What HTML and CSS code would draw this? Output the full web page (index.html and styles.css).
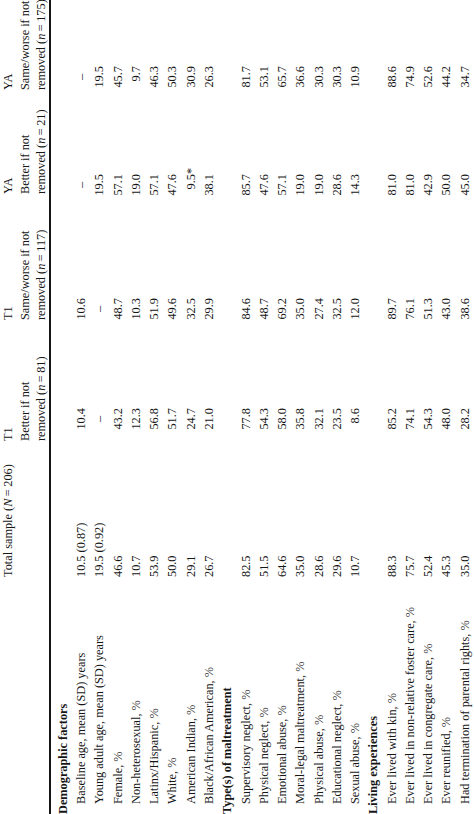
FILE: index.html
```html
<!DOCTYPE html>
<html lang="en">
<head>
<meta charset="utf-8">
<title>Table</title>
<link rel="stylesheet" href="styles.css">
</head>
<body>
<div class="page">
  <div class="sheet">
    <div class="row head">
      <div class="h h0"></div>
      <div class="h h1">Total sample (<i>N</i>&#8201;=&#8201;206)</div>
      <div class="h h2">T1<br>Better if not<br>removed (<i>n</i>&#8201;=&#8201;81)</div>
      <div class="h h3">T1<br>Same/worse if not<br>removed (<i>n</i>&#8201;=&#8201;117)</div>
      <div class="h h4">YA<br>Better if not<br>removed (<i>n</i>&#8201;=&#8201;21)</div>
      <div class="h h5">YA<br>Same/worse if not<br>removed (<i>n</i>&#8201;=&#8201;175)</div>
    </div>
    <div class="tbody">
      <div class="row"><div class="sec">Demographic factors</div></div>
      <div class="row"><div class="lab">Baseline age, mean (SD) years</div><div class="c1">10.5 (0.87)</div><div class="c2"><span class="v">10.4</span></div><div class="c3"><span class="v">10.6</span></div><div class="c4"><span class="v dash">–</span></div><div class="c5"><span class="v dash">–</span></div></div>
      <div class="row"><div class="lab">Young adult age, mean (SD) years</div><div class="c1">19.5 (0.92)</div><div class="c2"><span class="v dash">–</span></div><div class="c3"><span class="v dash">–</span></div><div class="c4"><span class="v">19.5</span></div><div class="c5"><span class="v">19.5</span></div></div>
      <div class="row"><div class="lab">Female, %</div><div class="c1">46.6</div><div class="c2"><span class="v">43.2</span></div><div class="c3"><span class="v">48.7</span></div><div class="c4"><span class="v">57.1</span></div><div class="c5"><span class="v">45.7</span></div></div>
      <div class="row"><div class="lab">Non-heterosexual, %</div><div class="c1">10.7</div><div class="c2"><span class="v">12.3</span></div><div class="c3"><span class="v">10.3</span></div><div class="c4"><span class="v">19.0</span></div><div class="c5"><span class="v">9.7</span></div></div>
      <div class="row"><div class="lab">Latinx/Hispanic, %</div><div class="c1">53.9</div><div class="c2"><span class="v">56.8</span></div><div class="c3"><span class="v">51.9</span></div><div class="c4"><span class="v">57.1</span></div><div class="c5"><span class="v">46.3</span></div></div>
      <div class="row"><div class="lab">White, %</div><div class="c1">50.0</div><div class="c2"><span class="v">51.7</span></div><div class="c3"><span class="v">49.6</span></div><div class="c4"><span class="v">47.6</span></div><div class="c5"><span class="v">50.3</span></div></div>
      <div class="row"><div class="lab">American Indian, %</div><div class="c1">29.1</div><div class="c2"><span class="v">24.7</span></div><div class="c3"><span class="v">32.5</span></div><div class="c4"><span class="v">9.5<span class="star">*</span></span></div><div class="c5"><span class="v">30.9</span></div></div>
      <div class="row"><div class="lab">Black/African American, %</div><div class="c1">26.7</div><div class="c2"><span class="v">21.0</span></div><div class="c3"><span class="v">29.9</span></div><div class="c4"><span class="v">38.1</span></div><div class="c5"><span class="v">26.3</span></div></div>
      <div class="row"><div class="sec">Type(s) of maltreatment</div></div>
      <div class="row"><div class="lab">Supervisory neglect, %</div><div class="c1">82.5</div><div class="c2"><span class="v">77.8</span></div><div class="c3"><span class="v">84.6</span></div><div class="c4"><span class="v">85.7</span></div><div class="c5"><span class="v">81.7</span></div></div>
      <div class="row"><div class="lab">Physical neglect, %</div><div class="c1">51.5</div><div class="c2"><span class="v">54.3</span></div><div class="c3"><span class="v">48.7</span></div><div class="c4"><span class="v">47.6</span></div><div class="c5"><span class="v">53.1</span></div></div>
      <div class="row"><div class="lab">Emotional abuse, %</div><div class="c1">64.6</div><div class="c2"><span class="v">58.0</span></div><div class="c3"><span class="v">69.2</span></div><div class="c4"><span class="v">57.1</span></div><div class="c5"><span class="v">65.7</span></div></div>
      <div class="row"><div class="lab">Moral-legal maltreatment, %</div><div class="c1">35.0</div><div class="c2"><span class="v">35.8</span></div><div class="c3"><span class="v">35.0</span></div><div class="c4"><span class="v">19.0</span></div><div class="c5"><span class="v">36.6</span></div></div>
      <div class="row"><div class="lab">Physical abuse, %</div><div class="c1">28.6</div><div class="c2"><span class="v">32.1</span></div><div class="c3"><span class="v">27.4</span></div><div class="c4"><span class="v">19.0</span></div><div class="c5"><span class="v">30.3</span></div></div>
      <div class="row"><div class="lab">Educational neglect, %</div><div class="c1">29.6</div><div class="c2"><span class="v">23.5</span></div><div class="c3"><span class="v">32.5</span></div><div class="c4"><span class="v">28.6</span></div><div class="c5"><span class="v">30.3</span></div></div>
      <div class="row"><div class="lab">Sexual abuse, %</div><div class="c1">10.7</div><div class="c2"><span class="v">8.6</span></div><div class="c3"><span class="v">12.0</span></div><div class="c4"><span class="v">14.3</span></div><div class="c5"><span class="v">10.9</span></div></div>
      <div class="row"><div class="sec">Living experiences</div></div>
      <div class="row"><div class="lab">Ever lived with kin, %</div><div class="c1">88.3</div><div class="c2"><span class="v">85.2</span></div><div class="c3"><span class="v">89.7</span></div><div class="c4"><span class="v">81.0</span></div><div class="c5"><span class="v">88.6</span></div></div>
      <div class="row"><div class="lab">Ever lived in non-relative foster care, %</div><div class="c1">75.7</div><div class="c2"><span class="v">74.1</span></div><div class="c3"><span class="v">76.1</span></div><div class="c4"><span class="v">81.0</span></div><div class="c5"><span class="v">74.9</span></div></div>
      <div class="row"><div class="lab">Ever lived in congregate care, %</div><div class="c1">52.4</div><div class="c2"><span class="v">54.3</span></div><div class="c3"><span class="v">51.3</span></div><div class="c4"><span class="v">42.9</span></div><div class="c5"><span class="v">52.6</span></div></div>
      <div class="row"><div class="lab">Ever reunified, %</div><div class="c1">45.3</div><div class="c2"><span class="v">48.0</span></div><div class="c3"><span class="v">43.0</span></div><div class="c4"><span class="v">50.0</span></div><div class="c5"><span class="v">44.2</span></div></div>
      <div class="row"><div class="lab">Had termination of parental rights, %</div><div class="c1">35.0</div><div class="c2"><span class="v">28.2</span></div><div class="c3"><span class="v">38.6</span></div><div class="c4"><span class="v">45.0</span></div><div class="c5"><span class="v">34.7</span></div></div>
    </div>
  </div>
</div>
</body>
</html>
```

FILE: styles.css
```css
html, body {
  margin: 0;
  padding: 0;
  background: #ffffff;
}

.page {
  width: 474px;
  height: 814px;
  overflow: hidden;
}

.sheet {
  width: 814px;
  height: 474px;
  transform-origin: 0 0;
  transform: translateY(814px) rotate(-90deg);
  font-family: "Liberation Serif", "Times New Roman", serif;
  font-size: 12.3px;
  color: #161616;
}

.row {
  display: grid;
  grid-template-columns: 237px 136px 121px 124px 106px 90px;
  height: 18.27px;
  line-height: 18.27px;
  white-space: nowrap;
}

.head {
  height: 49px;
  line-height: 16.6px;
  align-items: start;
  border-bottom: 2px solid #161616;
}

.h4 { padding-left: 2px; }

.tbody {
  padding-top: 2.9px;
}

.sec {
  grid-column: 1 / -1;
  font-weight: bold;
  padding-left: 0;
}

.lab {
  padding-left: 10px;
}

.c2 { padding-left: 11px; }
.c5 { padding-left: 2px; }

.v {
  display: inline-block;
  width: 22px;
  text-align: right;
}

.v.dash {
  text-align: center;
}

.star {
  display: inline-block;
  width: 6px;
  margin-right: -6px;
  text-align: left;
}
```
